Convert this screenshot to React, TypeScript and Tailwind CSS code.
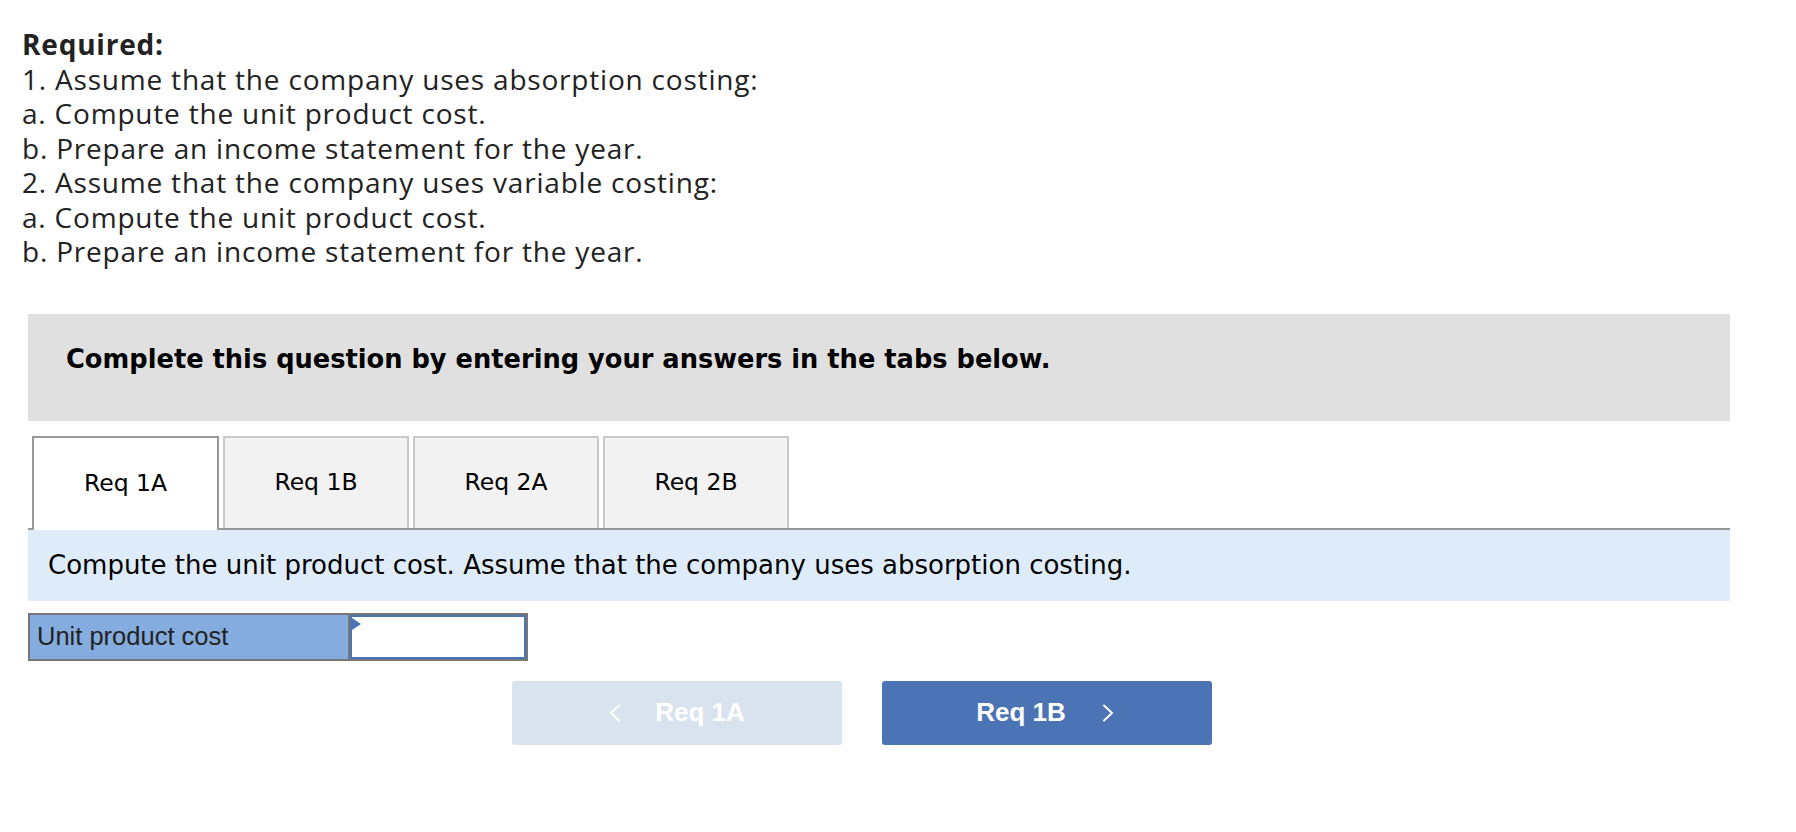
const lines = [
  "1. Assume that the company uses absorption costing:",
  "a. Compute the unit product cost.",
  "b. Prepare an income statement for the year.",
  "2. Assume that the company uses variable costing:",
  "a. Compute the unit product cost.",
  "b. Prepare an income statement for the year.",
];

const tabs = ["Req 1A", "Req 1B", "Req 2A", "Req 2B"];

function Chevron({ dir }: { dir: "left" | "right" }) {
  return (
    <svg width="12" height="18" viewBox="0 0 12 18" fill="none" stroke="currentColor" strokeWidth="2" strokeLinecap="round" strokeLinejoin="round">
      {dir === "left" ? <polyline points="10,1.5 2,9 10,16.5" /> : <polyline points="2,1.5 10,9 2,16.5" />}
    </svg>
  );
}

export default function App() {
  return (
    <div className="w-[1796px] h-[832px] bg-white text-[#222]">
      <div className="pt-[27px] pl-[22px] font-['Open_Sans',sans-serif] text-[28px] leading-[34.5px] tracking-[0.8px]">
        <div className="font-bold">Required:</div>
        {lines.map((l, i) => (
          <div key={i}>{l}</div>
        ))}
      </div>

      <div className="ml-[28px] w-[1702px] mt-[45px]">
        <div className="h-[107px] bg-[#e0e0e0] pt-[29px] pl-[38px] font-['DejaVu_Sans',Verdana,sans-serif] font-bold text-[25.7px] leading-[32px] text-black">
          Complete this question by entering your answers in the tabs below.
        </div>

        <div className="mt-[15px] flex items-end border-b-2 border-[#999] pl-[4px] gap-[4px] h-[94px]">
          {tabs.map((t, i) =>
            i === 0 ? (
              <div
                key={t}
                className="w-[187px] h-[94px] -mb-[2px] bg-white border-2 border-b-0 border-[#999] flex items-center justify-center font-['DejaVu_Sans',Verdana,sans-serif] text-[23.5px] text-black"
              >
                {t}
              </div>
            ) : (
              <div
                key={t}
                className="w-[186px] h-[92px] bg-[#f2f2f2] border-2 border-b-0 border-[#c8c8c8] flex items-center justify-center font-['DejaVu_Sans',Verdana,sans-serif] text-[23.5px] text-black"
              >
                {t}
              </div>
            )
          )}
        </div>

        <div className="h-[71px] bg-[#deebf8] flex items-center pl-[20px] font-['DejaVu_Sans',Verdana,sans-serif] text-[26px] text-black">
          Compute the unit product cost. Assume that the company uses absorption costing.
        </div>

        <div className="mt-[12px] flex w-[500px] h-[48px] border-2 border-[#777] font-['Liberation_Sans',Arial,sans-serif] text-[25.5px] text-[#222]">
          <div className="w-[320px] bg-[#84acdf] border-r-2 border-[#777] flex items-center pl-[7px]">
            Unit product cost
          </div>
          <div className="relative flex-1 border-2 border-[#4a74b4] bg-white">
            <div className="absolute left-0 top-[1px] w-0 h-0 border-t-[6px] border-b-[6px] border-l-[9px] border-t-transparent border-b-transparent border-l-[#4a74b4]" />
          </div>
        </div>

        <div className="mt-[20px] flex gap-[40px] pl-[484px] font-['Liberation_Sans',Arial,sans-serif] font-bold text-[26px] text-white">
          <div className="w-[330px] h-[64px] rounded-[3px] bg-[#d9e3ef] flex items-center justify-center gap-[34px]">
            <Chevron dir="left" />
            <span>Req 1A</span>
          </div>
          <div className="w-[330px] h-[64px] rounded-[3px] bg-[#4a74b4] flex items-center justify-center gap-[36px] pr-[4px]">
            <span>Req 1B</span>
            <Chevron dir="right" />
          </div>
        </div>
      </div>
    </div>
  );
}
